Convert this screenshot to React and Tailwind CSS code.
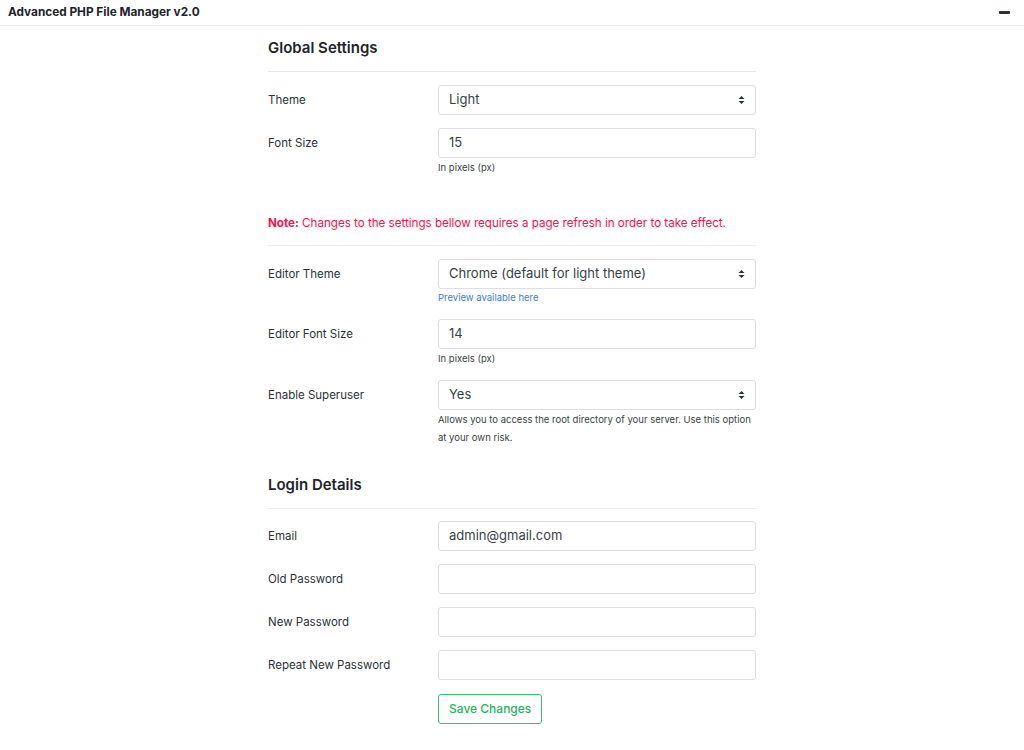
import React from 'react';

const Field = ({ label, children, help, mb = 'mb-[13px]' }) => (
  <div className={`flex ${mb}`}>
    <label className="w-[170px] shrink-0 pt-[7px] text-[11.5px] leading-[16px] text-[#2d3238]">{label}</label>
    <div className="flex-1">
      {children}
      {help}
    </div>
  </div>
);

const Input = ({ value = '' }) => (
  <div className="h-[30px] rounded-[3px] border border-[#dcdfe6] bg-white px-[10px] flex items-center text-[13px] text-[#3a3f45]">
    {value}
  </div>
);

const Select = ({ value }) => (
  <div className="h-[30px] rounded-[3px] border border-[#dcdfe6] bg-white pl-[10px] pr-[10px] flex items-center justify-between text-[13px] text-[#3a3f45]">
    <span>{value}</span>
    <svg width="7" height="10" viewBox="0 0 7 10">
      <path d="M3.5 1 L6.5 4 L0.5 4 Z" fill="#2d3238" />
      <path d="M3.5 9 L6.5 6 L0.5 6 Z" fill="#2d3238" />
    </svg>
  </div>
);

const Help = ({ children, top = 'mt-[1px]', color = 'text-[#3a3f45]' }) => (
  <p className={`${top} text-[9.5px] leading-[18px] ${color}`}>{children}</p>
);

export default function App() {
  return (
    <div className="min-h-screen bg-white" style={{ fontFamily: 'Inter, "Noto Sans", sans-serif' }}>
      <div className="h-[26px] flex items-center justify-between border-b border-[#eeeeee] pl-[8px] pr-[14px]">
        <span className="text-[11.8px] font-bold text-[#1f2329]">Advanced PHP File Manager v2.0</span>
        <span className="block w-[11px] h-[2.5px] bg-[#2a2f3a] rounded-[1px]" />
      </div>

      <div className="w-[488px] ml-[268px]">
        <h2 className="mt-[11px] text-[15px] font-semibold text-[#1f2329] leading-[22px]">Global Settings</h2>
        <div className="mt-[12px] mb-[13px] border-t border-[#e8e8e8]" />

        <Field label="Theme">
          <Select value="Light" />
        </Field>
        <Field label="Font Size" help={<Help>In pixels (px)</Help>}>
          <Input value="15" />
        </Field>

        <p className="mt-[37px] text-[11.6px] leading-[18px] text-[#f0134d]">
          <span className="font-bold">Note:</span> Changes to the settings bellow requires a page refresh in order to take effect.
        </p>
        <div className="mt-[13px] mb-[13px] border-t border-[#ececec]" />

        <Field label="Editor Theme" mb="mb-[12px]" help={<Help top="mt-0" color="text-[#3b7ddd]">Preview available here</Help>}>
          <Select value="Chrome (default for light theme)" />
        </Field>
        <Field label="Editor Font Size" mb="mb-[12px]" help={<Help>In pixels (px)</Help>}>
          <Input value="14" />
        </Field>
        <Field
          label="Enable Superuser"
          mb="mb-[12px]"
          help={<Help>Allows you to access the root directory of your server. Use this option at your own risk.</Help>}
        >
          <Select value="Yes" />
        </Field>

        <h2 className="mt-[27px] text-[15px] font-semibold text-[#1f2329] leading-[22px]">Login Details</h2>
        <div className="mt-[12px] mb-[12px] border-t border-[#ececec]" />

        <Field label="Email">
          <Input value="admin@gmail.com" />
        </Field>
        <Field label="Old Password">
          <Input />
        </Field>
        <Field label="New Password">
          <Input />
        </Field>
        <Field label="Repeat New Password" mb="mb-[14px]">
          <Input />
        </Field>

        <div className="ml-[170px]">
          <button className="h-[30px] px-[10px] rounded-[3px] border border-[#34c36a] text-[12px] font-medium text-[#26b45a] bg-white">
            Save Changes
          </button>
        </div>
      </div>
    </div>
  );
}
